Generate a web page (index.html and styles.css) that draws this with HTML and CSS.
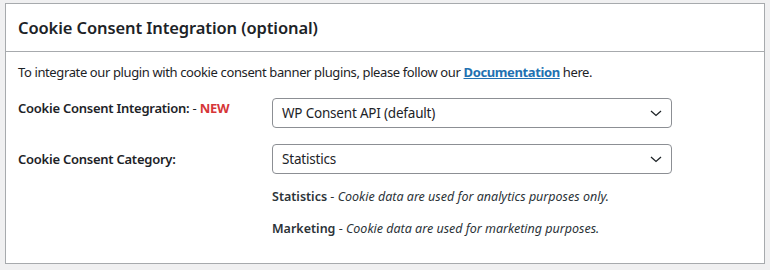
FILE: index.html
```html
<!DOCTYPE html>
<html>
<head>
<meta charset="utf-8">
<link rel="stylesheet" href="styles.css">
</head>
<body>
<div class="postbox">
  <div class="postbox-header">
    <h2 class="hndle">Cookie Consent Integration (optional)</h2>
  </div>
  <div class="inside">
    <p class="intro">To integrate our plugin with cookie consent banner plugins, please follow our <a href="#" class="doc-link">Documentation</a> here.</p>
    <div class="form-row">
      <div class="label label-first">Cookie Consent Integration: <span class="dash">-</span> <span class="new">NEW</span></div>
      <div class="field">
        <div class="select">
          <span class="select-text">WP Consent API (default)</span>
          <svg class="chevron" width="12" height="7" viewBox="0 0 12 7"><path d="M1 1 L6 5.5 L11 1" fill="none" stroke="#1d2327" stroke-width="1.3"/></svg>
        </div>
      </div>
    </div>
    <div class="form-row">
      <div class="label label-second">Cookie Consent Category:</div>
      <div class="field">
        <div class="select">
          <span class="select-text">Statistics</span>
          <svg class="chevron" width="12" height="7" viewBox="0 0 12 7"><path d="M1 1 L6 5.5 L11 1" fill="none" stroke="#1d2327" stroke-width="1.3"/></svg>
        </div>
        <p class="desc desc-first"><span class="desc-term">Statistics</span> - <em>Cookie data are used for analytics purposes only.</em></p>
        <p class="desc"><span class="desc-term">Marketing</span> - <em>Cookie data are used for marketing purposes.</em></p>
      </div>
    </div>
  </div>
</div>
</body>
</html>
```

FILE: styles.css
```css
html, body {
  margin: 0;
  padding: 0;
  background: #f0f0f1;
}
body {
  padding: 3px 0 0 5px;
  font-family: "Noto Sans", "Open Sans", sans-serif;
  font-size: 13px;
  color: #1d2327;
}
.postbox {
  width: 758px;
  height: 259px;
  background: #fff;
  border: 1px solid #a7aaad;
  box-sizing: content-box;
}
.postbox-header {
  height: 47px;
  border-bottom: 1px solid #a7aaad;
  display: flex;
  align-items: center;
  padding-left: 12px;
}
.hndle {
  margin: 0;
  font-size: 16.5px;
  font-weight: 600;
  color: #1d2327;
  letter-spacing: -0.1px;
}
.inside {
  padding: 10px 12px 0 12px;
}
.intro {
  margin: 0;
  line-height: 20px;
  letter-spacing: -0.38px;
}
.doc-link {
  color: #2271b1;
  font-weight: 700;
  text-decoration: underline;
}
.form-row {
  display: flex;
  margin-top: 16px;
}
.label {
  width: 254px;
  font-weight: 600;
  line-height: 20px;
  letter-spacing: -0.25px;
}
.label-first { padding-top: 0; }
.label-second { padding-top: 5px; }
.dash { font-weight: 400; }
.new {
  color: #d63638;
  font-weight: 700;
}
.field {
  width: 400px;
}
.select {
  height: 28px;
  border: 1px solid #8c8f94;
  border-radius: 4px;
  display: flex;
  align-items: center;
  justify-content: space-between;
  padding: 0 8px 0 9px;
  box-sizing: content-box;
  width: 381px;
  background: #fff;
}
.select-text {
  font-size: 13.5px;
  letter-spacing: -0.2px;
}
.chevron {
  display: block;
  margin-right: 1px;
}
.desc {
  margin: 0;
  line-height: 20px;
  font-size: 12.5px;
  color: #2c3338;
  letter-spacing: 0;
  margin-top: 12px;
}
.desc-first { margin-top: 13px; }
.desc-term { font-weight: 600; }
.desc em { font-style: italic; }
```
